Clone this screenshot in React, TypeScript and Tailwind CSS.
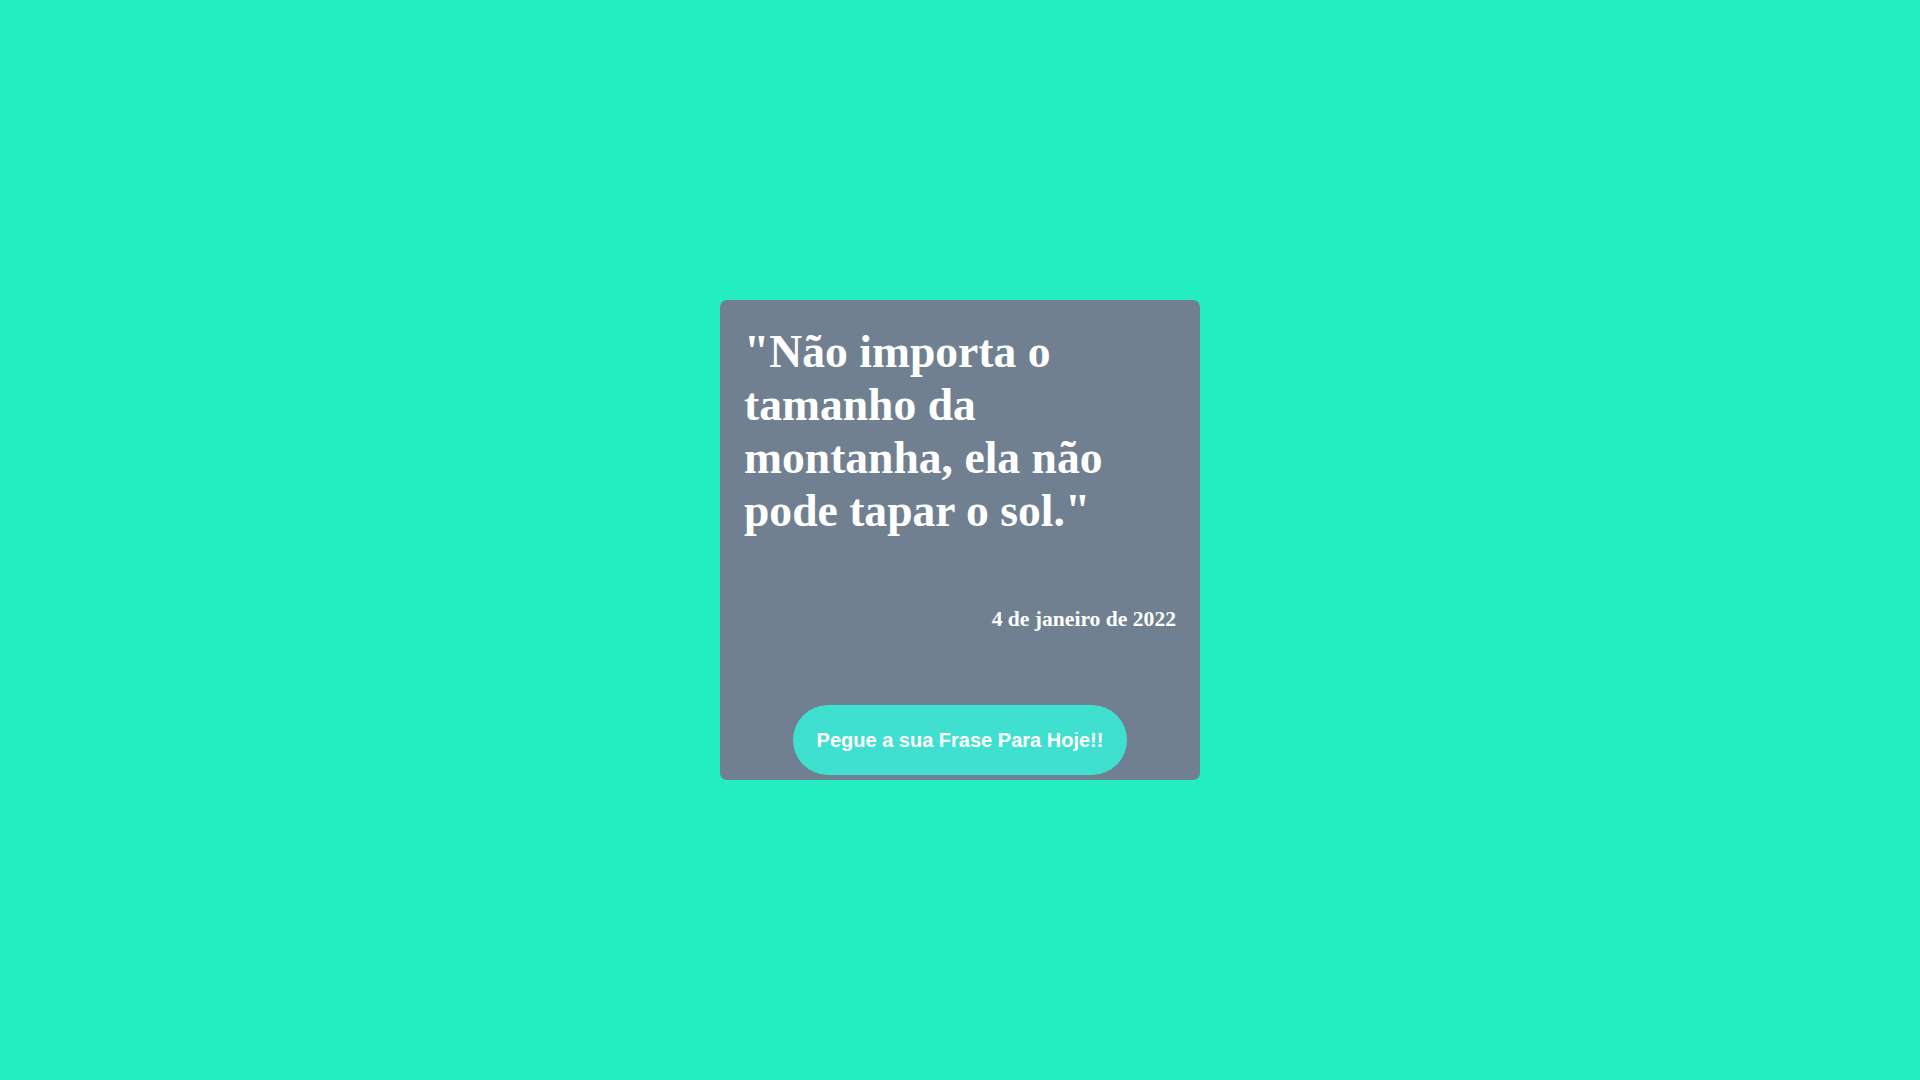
export default function App() {
  return (
    <div className="min-h-screen w-full flex items-center justify-center bg-[#25edc3]">
      <div className="w-[480px] h-[480px] rounded-[7px] bg-[#708090] flex flex-col px-6 pt-[25px] pb-[5px] text-white">
        <h1 className="font-['Liberation_Serif',serif] font-bold text-[45.6px] leading-[53px]">
          "Não importa o tamanho da montanha, ela não pode tapar o sol."
        </h1>
        <p className="mt-[70px] text-right font-['Liberation_Serif',serif] font-bold text-[21.6px] leading-[24px]">
          4 de janeiro de 2022
        </p>
        <button
          type="button"
          className="mt-auto self-center h-[70px] px-6 rounded-full bg-[#40e0d0] text-white font-['Liberation_Sans',Arial,sans-serif] font-bold text-[20px]"
        >
          Pegue a sua Frase Para Hoje!!
        </button>
      </div>
    </div>
  )
}
